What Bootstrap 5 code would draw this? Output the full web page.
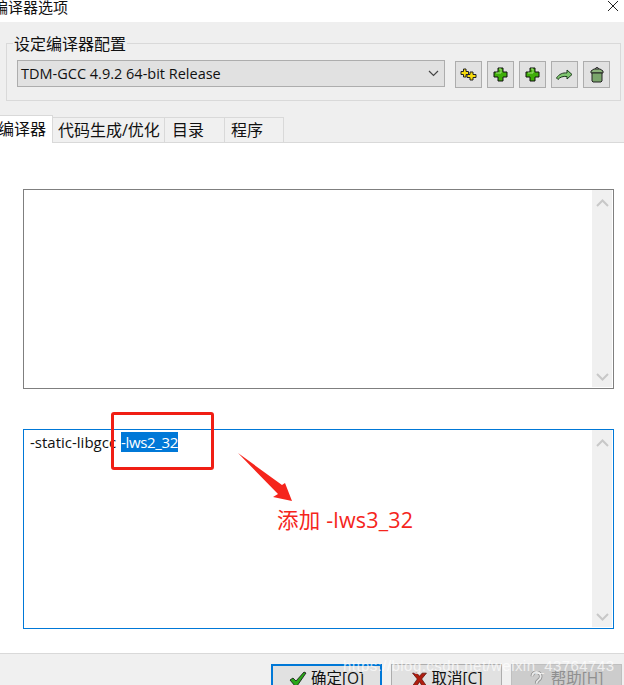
<!DOCTYPE html>
<html lang="zh"><head><meta charset="utf-8">
<link href="https://cdn.jsdelivr.net/npm/bootstrap@5.3.0/dist/css/bootstrap.min.css" rel="stylesheet">
<style>
html,body{margin:0;height:685px;overflow:hidden;background:#fff}
body{font-family:"Open Sans","Noto Sans CJK SC",sans-serif;color:#111;font-size:15px;line-height:1}
.stage{position:relative;width:624px;height:685px;overflow:hidden}
.titlebar{height:22px;background:#fff}
.titletext{font-size:15px;margin-left:-7px;margin-top:-2px;line-height:18px}
.closex{margin-right:5px;margin-top:0}
.toppanel{height:121px;background:#efefef;border-bottom:1px solid #d9d9d9;padding:21px 3px 0 6px}
.groupframe{height:58px;width:615px;border:1px solid #d9d9d9;padding:16px 0 0 10px;position:relative}
.grouplabel{position:absolute;left:6px;top:-9px;font-size:16px;line-height:18px;background:#efefef;padding:0 1px}
.combo{width:428px;height:27px;background:#e1e1e1;border:1px solid #adadad;padding:2px 3px 0;font-size:14.5px}
.chev{margin-right:2px;margin-top:-2px}
.toolbtn{width:27px;height:27px;background:#e1e1e1;border:1px solid #adadad;margin-top:1px}
.toolgap{margin-left:10px;gap:5px}
.tabstrip{height:28px;margin-top:14px;margin-bottom:-1px;margin-left:-6px;position:relative}
.tabitem{height:25px;margin-top:2px;background:#f0f0f0;border:1px solid #d9d9d9;border-left:0;border-bottom:0;font-size:16px;padding-left:5px;line-height:24px}
.tabon{height:28px;width:53px;margin-top:0;background:#fff;border-bottom:0;padding-left:0;text-indent:-2px;line-height:26px}
.tabcode{width:112px}
.tabdir{width:60px;padding-left:7px}
.tabprog{width:59px;padding-left:6px}
.whitearea{height:511px;background:#fff;padding:46px 10px 0 23px;border-bottom:1px solid #d9d9d9}
.memo{width:591px;height:200px;border:1px solid #7f7f7f;padding:0 1px 1px 0}
.memoactive{border-color:#0078d7;margin-top:40px}
.memotext{padding:4px 0 0 6px;font-size:15px;line-height:16px;white-space:nowrap}
.sel{background:#0078d7;color:#fff;letter-spacing:-.35px;margin-left:1px}
.sbar{width:20px;background:#f0f0f0;padding:9px 0 6px}
.bottombar{height:32px;background:#f0f0f0;padding:10px 0 0 271px;gap:9px}
.dlgbtn{width:111px;height:32px;background:#e1e1e1;border:1px solid #adadad;font-size:15.5px;padding:6px 0 0}
.dlgdefault{border:2px solid #0078d7;padding-top:5px}
.dlgoff{background:#ccc;border-color:#bfbfbf;color:#8f8f8f}
.markbox{position:absolute;left:111px;top:412px;width:103px;height:58px;border:3px solid #f01e14;border-radius:3px}
.arrowmark{position:absolute;left:235px;top:452px}
.addnote{position:absolute;left:277px;top:507px;color:#f5251c;font-size:21.5px;line-height:26px;white-space:nowrap;letter-spacing:.2px}
.stamp{position:absolute;left:343px;top:657px;color:rgba(255,255,255,.7);font-size:15px;line-height:18px;white-space:nowrap;font-family:"Liberation Sans",sans-serif;letter-spacing:.44px}
</style></head><body>
<div class="stage">
 <div class="titlebar d-flex justify-content-between align-items-start">
  <div class="titletext">编译器选项</div>
  <svg class="closex" width="12" height="12" viewBox="0 0 12 12"><path d="M1 1l10 10M11 1L1 11" stroke="#222" stroke-width="1"/></svg>
 </div>
 <div class="toppanel">
  <div class="groupframe">
   <div class="grouplabel">设定编译器配置</div>
   <div class="d-flex align-items-start">
    <div class="combo d-flex align-items-center justify-content-between">
     <span>TDM-GCC 4.9.2 64-bit Release</span>
     <svg class="chev" width="11" height="7" viewBox="0 0 11 7"><path d="M1 1l4.500 4.500L10 1" fill="none" stroke="#444" stroke-width="1.200"/></svg>
    </div>
    <div class="d-flex toolgap">
     <div class="toolbtn d-flex align-items-center justify-content-center"><svg width="17" height="13" viewBox="0 0 17 13"><path d="M3.500 1h2.500v2.500h2.500v3H6v2.500H3.500V6.500H1v-3h2.500z" fill="#f7dc0c" stroke="#222"/><path d="M10 4h3v2.500h3v3h-3V12h-3V9.500H7v-3h3z" fill="#f7dc0c" stroke="#222"/></svg></div>
     <div class="toolbtn d-flex align-items-center justify-content-center"><svg width="15" height="15" viewBox="0 0 15 15"><path d="M5 1h5v4h4v5h-4v4H5v-4H1V5h4z" fill="#3fae0a" stroke="#111" stroke-linejoin="round"/><path d="M6 2h2v4H3" fill="none" stroke="#a5e37c"/></svg></div>
     <div class="toolbtn d-flex align-items-center justify-content-center"><svg width="15" height="15" viewBox="0 0 15 15"><path d="M5 1h5v4h4v5h-4v4H5v-4H1V5h4z" fill="#3fae0a" stroke="#111" stroke-linejoin="round"/><path d="M6 2h2v4H3" fill="none" stroke="#a5e37c"/></svg></div>
     <div class="toolbtn d-flex align-items-center justify-content-center"><svg width="17" height="12" viewBox="0 0 17 12"><path d="M0.500 9C3 5 7 3.500 11 4V1l5 4.500-5 4.500V7.500C7 7 4 8 2 10.500z" fill="#7fc66f" stroke="#1d3a1d" stroke-linejoin="round"/></svg></div>
     <div class="toolbtn d-flex align-items-center justify-content-center"><svg width="14" height="17" viewBox="0 0 14 17"><path d="M5.500 3a1.500 1.500 0 0 1 3 0" fill="none" stroke="#222"/><path d="M1 5l3-2h6l3 2v2H1z" fill="#8cb37c" stroke="#222"/><path d="M2 7h10v8l-1 1H3l-1-1z" fill="#7aa56c" stroke="#222"/></svg></div>
    </div>
   </div>
  </div>
  <div class="tabstrip d-flex">
   <div class="tabitem tabon">编译器</div>
   <div class="tabitem tabcode">代码生成/优化</div>
   <div class="tabitem tabdir">目录</div>
   <div class="tabitem tabprog">程序</div>
  </div>
 </div>
 <div class="whitearea">
  <div class="memo d-flex justify-content-between">
   <div class="memotext"></div>
   <div class="sbar d-flex flex-column justify-content-between align-items-center">
    <svg width="13" height="8" viewBox="0 0 13 8"><path d="M1 7l5.500-5.500L12 7" fill="none" stroke="#c8c8c8" stroke-width="2"/></svg>
    <svg width="13" height="8" viewBox="0 0 13 8"><path d="M1 1l5.500 5.500L12 1" fill="none" stroke="#c8c8c8" stroke-width="2"/></svg>
   </div>
  </div>
  <div class="memo memoactive d-flex justify-content-between">
   <div class="memotext">-static-libgcc <span class="sel">-lws2_32</span></div>
   <div class="sbar d-flex flex-column justify-content-between align-items-center">
    <svg width="13" height="8" viewBox="0 0 13 8"><path d="M1 7l5.500-5.500L12 7" fill="none" stroke="#c8c8c8" stroke-width="2"/></svg>
    <svg width="13" height="8" viewBox="0 0 13 8"><path d="M1 1l5.500 5.500L12 1" fill="none" stroke="#c8c8c8" stroke-width="2"/></svg>
   </div>
  </div>
 </div>
 <div class="bottombar d-flex align-items-start">
  <div class="dlgbtn dlgdefault d-flex justify-content-center gap-1"><svg width="18" height="16" viewBox="0 0 18 16"><path d="M1 9l3-2 3 3 8-9 2 1-9 13H6z" fill="#2aa71a" stroke="#111" stroke-width=".8"/></svg><span>确定[O]</span></div>
  <div class="dlgbtn d-flex justify-content-center gap-1"><svg width="17" height="16" viewBox="0 0 15 15"><path d="M1 2h4l2.500 3L10 2h4l-4.500 5.500L14 14h-4l-2.500-4L5 14H1l4.500-6.500z" fill="#b01e10" stroke="#5a0d05" stroke-width=".7"/></svg><span>取消[C]</span></div>
  <div class="dlgbtn dlgoff d-flex justify-content-center gap-2"><svg width="13" height="18" viewBox="0 0 12 17"><path d="M2 5a4 4 0 1 1 6 3.500C6.500 9.500 6 10 6 12" fill="none" stroke="#8f8f8f" stroke-width="3.200"/><path d="M2 5a4 4 0 1 1 6 3.500C6.500 9.500 6 10 6 12" fill="none" stroke="#e8e8e8" stroke-width="1.800"/><circle cx="6" cy="15" r="1.400" fill="#e8e8e8" stroke="#8f8f8f" stroke-width=".6"/></svg><span>帮助[H]</span></div>
 </div>
 <div class="markbox"></div>
 <svg class="arrowmark" width="60" height="52" viewBox="0 0 60 52"><path d="M3 1L47 33l3-2 7 18-19-4 5-3z" fill="#f5251c"/></svg>
 <div class="addnote">添加 -lws3_32</div>
 <div class="stamp">https://blog.csdn.net/weixin_43764743</div>
</div>
</body></html>
